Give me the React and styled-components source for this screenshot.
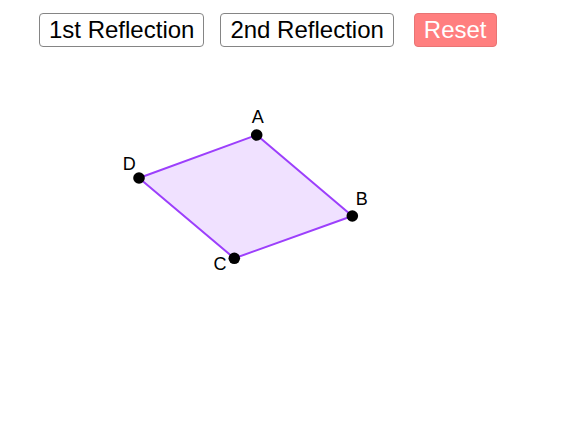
import React from 'react'
import styled, { createGlobalStyle } from 'styled-components'

const GlobalStyle = createGlobalStyle`
  html, body {
    margin: 0;
    padding: 0;
    background: #ffffff;
  }
  body {
    font-family: "Liberation Sans", Arial, sans-serif;
  }
`

const Page = styled.div`
  width: 575px;
  height: 438px;
  display: flex;
  flex-direction: column;
  background: #ffffff;
  overflow: hidden;
`

const Toolbar = styled.div`
  display: flex;
  align-items: flex-start;
  gap: 16px;
  padding: 13px 0 0 39px;
  height: 34px;
`

const Button = styled.button`
  height: 34px;
  padding: 0 9px;
  margin-left: ${({ $shift }) => $shift || 0}px;
  font-family: "Liberation Sans", Arial, sans-serif;
  font-size: 24px;
  line-height: 32px;
  border-radius: 4px;
  cursor: pointer;
  border: 1px solid ${({ $danger }) => ($danger ? '#e87474' : '#858585')};
  background: ${({ $danger }) => ($danger ? '#ff7f7f' : '#ffffff')};
  color: ${({ $danger }) => ($danger ? '#ffffff' : '#000000')};
`

const Board = styled.svg`
  display: block;
  width: 575px;
  height: 391px;
`

const Label = styled.text`
  font-family: "Liberation Sans", Arial, sans-serif;
  font-size: 18px;
  fill: #000000;
`

const points = [
  { name: 'A', x: 256.7, y: 135, lx: 257.7, ly: 117 },
  { name: 'B', x: 352.3, y: 216, lx: 361.7, ly: 199 },
  { name: 'C', x: 234.3, y: 258.3, lx: 220, ly: 263.5 },
  { name: 'D', x: 139, y: 178, lx: 129.3, ly: 163.5 },
]

const App = () => {
  const outline = points.map((p) => `${p.x},${p.y}`).join(' ')

  return (
    <Page>
      <GlobalStyle />
      <Toolbar>
        <Button>1st Reflection</Button>
        <Button>2nd Reflection</Button>
        <Button $danger $shift={4}>Reset</Button>
      </Toolbar>
      <Board viewBox="0 47 575 391">
        <polygon
          points={outline}
          fill="rgba(153, 51, 255, 0.15)"
          stroke="#9c3ffc"
          strokeWidth="2"
          strokeLinejoin="round"
        />
        {points.map((p) => (
          <g key={p.name}>
            <circle cx={p.x} cy={p.y} r="5.8" fill="#000000" />
            <Label x={p.lx} y={p.ly} textAnchor="middle" dominantBaseline="central">
              {p.name}
            </Label>
          </g>
        ))}
      </Board>
    </Page>
  )
}

export default App
